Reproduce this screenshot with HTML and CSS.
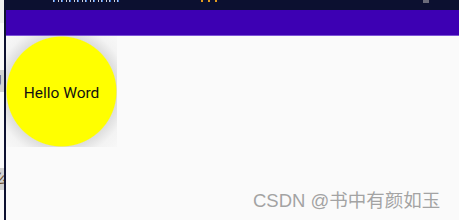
FILE: index.html
```html
<!DOCTYPE html>
<html>
<head>
<meta charset="utf-8">
<link rel="stylesheet" href="styles.css">
</head>
<body>
<div class="screen">
  <div class="side">
    <div class="side-top"></div>
    <div class="side-chip chip-a">J</div>
    <div class="side-chip chip-b">么</div>
  </div>
  <div class="edge"></div>
  <div class="phone">
    <div class="status">
      <span class="dots dots-a"></span>
      <span class="dots dots-b"></span>
      <span class="dots dots-c"></span>
    </div>
    <div class="appbar"></div>
    <div class="content">
      <div class="bubble-wrap">
        <div class="bubble">Hello Word</div>
      </div>
      <div class="watermark">CSDN @书中有颜如玉</div>
    </div>
  </div>
</div>
</body>
</html>
```
FILE: styles.css
```css
html, body {
  margin: 0;
  padding: 0;
  width: 459px;
  height: 220px;
  overflow: hidden;
  background: #fafafa;
  font-family: Roboto, "Noto Sans", "Noto Sans CJK SC", sans-serif;
}
.screen {
  display: flex;
  width: 459px;
  height: 220px;
}
.side {
  width: 4px;
  display: flex;
  flex-direction: column;
  background: #fafafa;
  overflow: hidden;
}
.side-top {
  height: 23px;
  background: #efefef;
}
.side-chip {
  height: 22px;
  background: #d2d2d2;
  font-size: 14px;
  line-height: 22px;
  color: #6a4a2a;
  text-indent: -6px;
  overflow: hidden;
}
.chip-a { margin-top: 47px; }
.chip-b { margin-top: 76px; }
.edge {
  width: 2px;
  background: #0d1130;
}
.phone {
  flex: 1;
  display: flex;
  flex-direction: column;
}
.status {
  height: 10px;
  background: #0c1030;
  margin-left: -2px;
  position: relative;
}
.dots {
  position: absolute;
  top: 0;
  height: 2px;
}
.dots-a {
  left: 49px;
  width: 66px;
  background: repeating-linear-gradient(90deg, #b8c8e8 0 1px, #3a78d8 1px 2px, #0c1030 2px 5px, #d0d0d8 5px 6px, #0c1030 6px 8px);
}
.dots-b {
  left: 197px;
  width: 20px;
  background: repeating-linear-gradient(90deg, #e09a20 0 2px, #0c1030 2px 7px);
}
.dots-c {
  left: 419px;
  width: 6px;
  height: 3px;
  background: #6a6a7a;
}
.appbar {
  height: 25px;
  background: #3d00b3;
  border-bottom: 1px solid #7d55d6;
}
.content {
  flex: 1;
  position: relative;
  background: #fafafa;
}
.bubble-wrap {
  width: 111px;
  height: 111px;
  background: radial-gradient(circle closest-side, #ffff00 98%, #dedede 100%, #f3f3f3 120%, #f8f8f8 141%);
}
.bubble {
  width: 111px;
  height: 111px;
  box-sizing: border-box;
  padding-top: 2px;
  display: flex;
  align-items: center;
  justify-content: center;
  font-size: 15.5px;
  color: #111;
}
.watermark {
  position: absolute;
  left: 247px;
  top: 150px;
  font-family: "Liberation Sans", "Noto Sans CJK SC", sans-serif;
  font-size: 18.5px;
  color: #a3a3a3;
  text-shadow: 0 0 1px #fff;
  white-space: nowrap;
}
```
